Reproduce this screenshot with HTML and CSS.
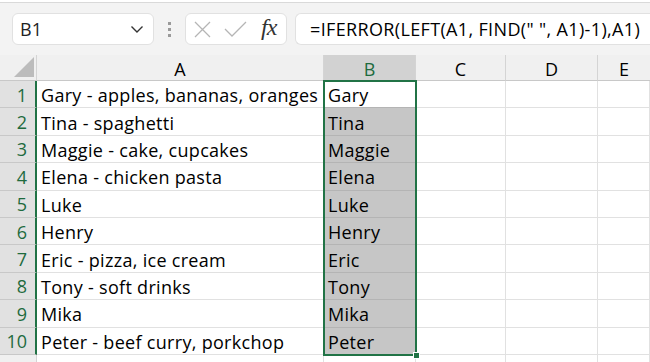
FILE: index.html
```html
<!DOCTYPE html>
<html>
<head>
<meta charset="utf-8">
<link rel="stylesheet" href="styles.css">
</head>
<body>
<div class="topstrip"></div>
<div class="toolbar">
  <div class="namebox">
    <span class="ref">B1</span>
    <svg class="chev" width="14" height="9" viewBox="0 0 14 9"><path d="M1.5 1.5 L7 7 L12.5 1.5" fill="none" stroke="#333" stroke-width="1.4"/></svg>
  </div>
  <div class="dots"><i></i><i></i><i></i></div>
  <div class="fxbox">
    <svg width="17" height="17" viewBox="0 0 17 17"><path d="M1 1 L16 16 M16 1 L1 16" stroke="#b5b5b5" stroke-width="1.3" fill="none"/></svg>
    <svg width="23" height="16" viewBox="0 0 23 16"><path d="M1 8 L8 15 L22 1" stroke="#b5b5b5" stroke-width="1.3" fill="none"/></svg>
    <span class="fx">fx</span>
  </div>
  <div class="formula">=IFERROR(LEFT(A1, FIND(" ", A1)-1),A1)</div>
</div>
<div class="sheet">
  <div class="corner"><span class="tri"></span></div>
  <div class="ch">A</div>
  <div class="ch sel">B</div>
  <div class="ch">C</div>
  <div class="ch">D</div>
  <div class="ch last">E</div>

  <div class="rh">1</div><div class="c">Gary - apples, bananas, oranges</div><div class="c b first">Gary</div><div class="c"></div><div class="c"></div><div class="c"></div>
  <div class="rh">2</div><div class="c">Tina - spaghetti</div><div class="c b">Tina</div><div class="c"></div><div class="c"></div><div class="c"></div>
  <div class="rh">3</div><div class="c">Maggie - cake, cupcakes</div><div class="c b">Maggie</div><div class="c"></div><div class="c"></div><div class="c"></div>
  <div class="rh">4</div><div class="c">Elena - chicken pasta</div><div class="c b">Elena</div><div class="c"></div><div class="c"></div><div class="c"></div>
  <div class="rh">5</div><div class="c">Luke</div><div class="c b">Luke</div><div class="c"></div><div class="c"></div><div class="c"></div>
  <div class="rh">6</div><div class="c">Henry</div><div class="c b">Henry</div><div class="c"></div><div class="c"></div><div class="c"></div>
  <div class="rh">7</div><div class="c">Eric - pizza, ice cream</div><div class="c b">Eric</div><div class="c"></div><div class="c"></div><div class="c"></div>
  <div class="rh">8</div><div class="c">Tony - soft drinks</div><div class="c b">Tony</div><div class="c"></div><div class="c"></div><div class="c"></div>
  <div class="rh">9</div><div class="c">Mika</div><div class="c b">Mika</div><div class="c"></div><div class="c"></div><div class="c"></div>
  <div class="rh">10</div><div class="c">Peter - beef curry, porkchop</div><div class="c b">Peter</div><div class="c"></div><div class="c"></div><div class="c"></div>
  <div class="rh plain"></div><div class="c"></div><div class="c"></div><div class="c"></div><div class="c"></div><div class="c"></div>

  <div class="selbox"><span class="handle"></span></div>
</div>
</body>
</html>
```

FILE: styles.css
```css
* { box-sizing: border-box; }
html, body { margin: 0; padding: 0; }
body {
  width: 650px;
  height: 362px;
  overflow: hidden;
  background: #fff;
  font-family: "Open Sans", "Noto Sans", sans-serif;
  color: #000;
}
.topstrip {
  height: 3px;
  background: #fff;
  border-bottom: 1px solid #d9d9d9;
}
.toolbar {
  height: 52px;
  background: #f3f3f3;
  display: flex;
  align-items: center;
  padding-left: 12px;
  padding-top: 0;
}
.namebox {
  width: 142px;
  height: 32px;
  background: #fff;
  border: 1px solid #e1e1e1;
  border-radius: 6px;
  display: flex;
  align-items: center;
  justify-content: space-between;
  padding: 0 9px 0 7px;
  font-size: 18px;
  color: #222;
}
.dots {
  width: 31px;
  display: flex;
  flex-direction: column;
  align-items: center;
  gap: 3px;
}
.dots i {
  width: 3px;
  height: 3px;
  background: #9a9a9a;
  display: block;
}
.fxbox {
  width: 102px;
  height: 32px;
  background: #fff;
  border: 1px solid #e1e1e1;
  border-radius: 6px;
  display: flex;
  align-items: center;
  gap: 13px;
  padding-left: 8px;
}
.fx {
  font-family: "Liberation Serif", "DejaVu Serif", serif;
  font-style: italic;
  font-size: 24px;
  color: #333;
  margin-left: 1px;
  margin-top: -3px;
  letter-spacing: -1px;
}
.formula {
  flex: 1;
  margin-left: 8px;
  height: 32px;
  background: #fff;
  border: 1px solid #e1e1e1;
  border-right: none;
  border-radius: 6px 0 0 6px;
  display: flex;
  align-items: center;
  padding-left: 14px;
  font-size: 18px;
  letter-spacing: 0.35px;
  white-space: nowrap;
  overflow: hidden;
}
.sheet {
  position: relative;
  display: grid;
  grid-template-columns: 37px 287px 92px 90px 92px 1fr;
  grid-template-rows: 26px repeat(10, 27.4px) 20px;
}
.corner {
  background: #f0f0f0;
  border-right: 1px solid #d4d4d4;
  border-bottom: 1px solid #c8c8c8;
  position: relative;
}
.tri {
  position: absolute;
  right: 2px;
  bottom: 3px;
  width: 0;
  height: 0;
  border-left: 20px solid transparent;
  border-bottom: 20px solid #bcbcbc;
}
.ch {
  background: #f0f0f0;
  border-right: 1px solid #d4d4d4;
  border-bottom: 1px solid #c8c8c8;
  display: flex;
  align-items: center;
  justify-content: center;
  font-size: 18px;
  padding-top: 2px;
}
.ch.sel {
  background: #d2d2d2;
  color: #1e6b3e;
  border-bottom: 1px solid #217346;
}
.ch.last { border-right: none; }
.rh {
  background: #e1e1e1;
  border-right: 2px solid #217346;
  border-bottom: 1px solid #c8c8c8;
  color: #1e6b3e;
  font-size: 18px;
  display: flex;
  align-items: center;
  justify-content: flex-end;
  padding-right: 8px;
  padding-top: 1px;
}
.rh.plain {
  background: #f0f0f0;
  border-right: 1px solid #d4d4d4;
}
.c {
  border-right: 1px solid #e1e1e1;
  border-bottom: 1px solid #e1e1e1;
  font-size: 18px;
  display: flex;
  align-items: center;
  padding-left: 4px;
  padding-top: 2px;
  white-space: nowrap;
  letter-spacing: 0.3px;
}
.c.b {
  background: #c6c6c6;
  border-bottom-color: #b4b4b4;
}
.c.b.first { background: #fff; }
.selbox {
  position: absolute;
  left: 323px;
  top: 25px;
  width: 94px;
  height: 276px;
  border: 2px solid #217346;
  pointer-events: none;
}
.handle {
  position: absolute;
  right: -5px;
  bottom: -5px;
  width: 7px;
  height: 7px;
  background: #217346;
  border: 1px solid #fff;
}
```
